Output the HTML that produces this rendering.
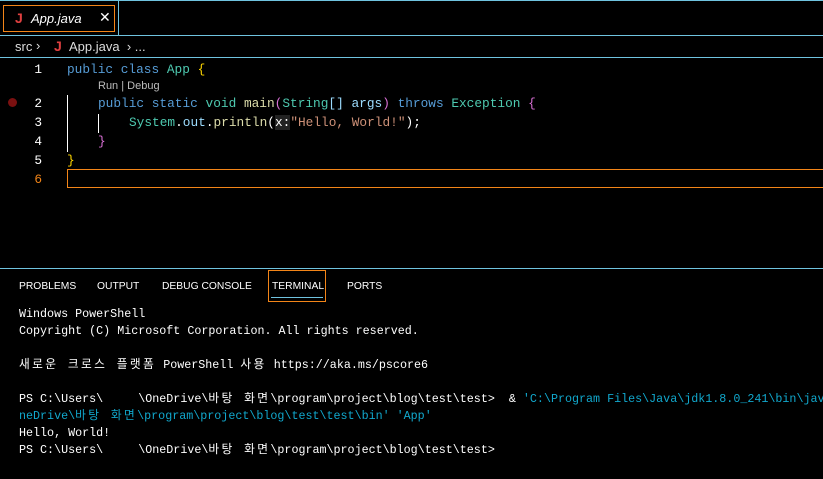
<!DOCTYPE html>
<html><head><meta charset="utf-8"><style>
*{margin:0;padding:0;box-sizing:border-box}
body{width:823px;height:479px;background:#000;overflow:hidden;position:relative;font-family:"Liberation Sans","Noto Sans CJK KR",sans-serif;color:#fff}
.a{position:absolute;white-space:pre}
.hl{position:absolute;height:1px;background:#6fc3df;left:0;width:823px}
.code{font-family:"Liberation Mono","Noto Sans CJK KR",monospace;font-size:12.8px;line-height:19px}
.ln{font-family:"Liberation Mono",monospace;font-size:12.8px;width:42px;text-align:right;color:#fff}
.t{font-family:"Liberation Mono","Noto Sans CJK KR",monospace;font-size:11.7px;line-height:17px;color:#fff}
.k{letter-spacing:2.4px}
.kw{color:#569cd6}.ty{color:#4ec9b0}.fn{color:#dcdcaa}.st{color:#ce9178}.br{color:#ffd700}.pu{color:#da70d6}.va{color:#9cdcfe}
.tab{font-size:10.3px;top:281px;color:#fff}
.cy{color:#11a8cd}
</style></head><body>
<div class="hl" style="top:0"></div>
<div class="hl" style="top:35px"></div>
<div class="hl" style="top:57px"></div>
<div class="hl" style="top:268px"></div>
<div class="a" style="left:118px;top:0;width:1px;height:35px;background:#6fc3df"></div>
<div class="a" style="left:3px;top:5px;width:112px;height:27px;border:1px solid #f38518"></div>
<div class="a" style="left:15px;top:10px;color:#e04040;font-weight:bold;font-size:14px">J</div>
<div class="a" style="left:31px;top:11px;font-style:italic;font-size:13px">App.java</div>
<div class="a" style="left:99px;top:9px;font-size:14px">✕</div>
<div class="a" style="left:15px;top:39px;font-size:13px;color:#ddd">src</div>
<div class="a" style="left:36px;top:38px;font-size:13px;color:#ddd">›</div>
<div class="a" style="left:54px;top:38px;color:#e04040;font-weight:bold;font-size:14px">J</div>
<div class="a" style="left:69px;top:39px;font-size:13px;color:#ddd">App.java  › ...</div>

<div class="a ln" style="left:0;top:60px;line-height:19px">1</div>
<div class="a" style="left:8px;top:98px;width:9px;height:9px;border-radius:50%;background:#7a1010"></div>
<div class="a ln" style="left:0;top:94px;line-height:19px">2</div>
<div class="a ln" style="left:0;top:113px;line-height:19px">3</div>
<div class="a ln" style="left:0;top:132px;line-height:19px">4</div>
<div class="a ln" style="left:0;top:151px;line-height:19px">5</div>
<div class="a ln" style="left:0;top:170px;line-height:19px;color:#f38518">6</div>

<div class="a code" style="left:67px;top:60px"><span class="kw">public class</span> <span class="ty">App</span> <span class="br">{</span></div>
<div class="a" style="left:98px;top:80px;font-size:11px;color:#bbb">Run | Debug</div>
<div class="a code" style="left:98px;top:94px"><span class="kw">public static</span> <span class="ty">void</span> <span class="fn">main</span><span class="pu">(</span><span class="ty">String</span><span class="va">[]</span> <span class="va">args</span><span class="pu">)</span> <span class="kw">throws</span> <span class="ty">Exception</span> <span class="pu">{</span></div>
<div class="a code" style="left:129px;top:113px"><span class="ty">System</span>.<span class="va">out</span>.<span class="fn">println</span>(<span style="background:#222">x:</span><span class="st">"Hello, World!"</span>);</div>
<div class="a code" style="left:98px;top:132px"><span class="pu">}</span></div>
<div class="a code" style="left:67px;top:151px"><span class="br">}</span></div>
<div class="a" style="left:67px;top:95px;width:1px;height:57px;background:#fff"></div>
<div class="a" style="left:98px;top:114px;width:1px;height:19px;background:#fff"></div>
<div class="a" style="left:67px;top:169px;width:760px;height:19px;border:1px solid #f38518"></div>

<div class="a tab" style="left:19px">PROBLEMS</div>
<div class="a tab" style="left:97px">OUTPUT</div>
<div class="a tab" style="left:162px">DEBUG CONSOLE</div>
<div class="a" style="left:268px;top:270px;width:58px;height:32px;border:1px solid #f38518"></div>
<div class="a" style="left:271px;top:297px;width:52px;height:1px;background:#6fc3df"></div>
<div class="a tab" style="left:272px">TERMINAL</div>
<div class="a tab" style="left:347px">PORTS</div>

<div class="a t" style="left:19px;top:306px">Windows PowerShell
Copyright (C) Microsoft Corporation. All rights reserved.

<span class="k">새로운 크로스 플랫폼</span> PowerShell <span class="k">사용</span> https://aka.ms/pscore6

PS C:\Users\     \OneDrive\<span class="k">바탕 화면</span>\program\project\blog\test\test>  &amp; <span class="cy">'C:\Program Files\Java\jdk1.8.0_241\bin\java</span>
<span class="cy">neDrive\<span class="k">바탕 화면</span>\program\project\blog\test\test\bin' 'App'</span>
Hello, World!
PS C:\Users\     \OneDrive\<span class="k">바탕 화면</span>\program\project\blog\test\test></div>
</body></html>
